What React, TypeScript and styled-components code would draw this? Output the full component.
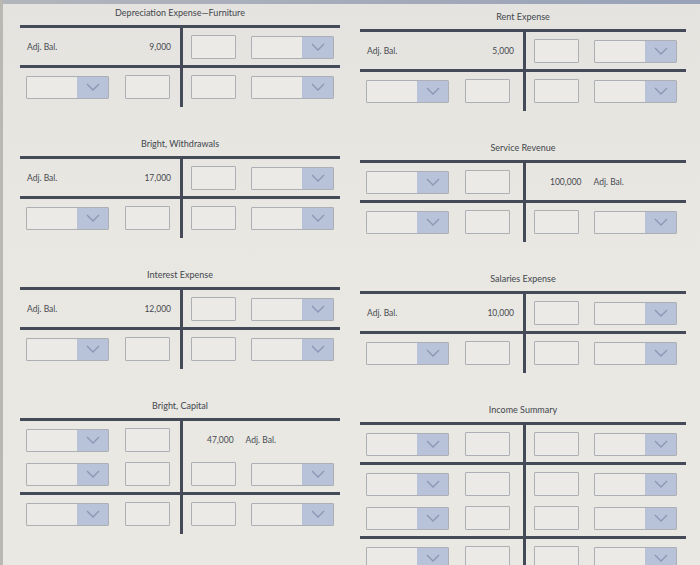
import React from "react";
import styled, { createGlobalStyle } from "styled-components";

const GlobalStyle = createGlobalStyle`
  html, body {
    margin: 0;
    padding: 0;
    width: 700px;
    height: 565px;
    overflow: hidden;
    background: #e7e6e1;
  }
  * { box-sizing: border-box; }
`;

type Side =
  | { kind: "entry" }
  | { kind: "debitBal"; amount: string }
  | { kind: "creditBal"; amount: string };

type Row = { left: Side; right: Side };
type Account = { title: string; sections: Row[][] };

const E: Side = { kind: "entry" };
const entryRow: Row = { left: E, right: E };
const debit = (amount: string): Row => ({ left: { kind: "debitBal", amount }, right: E });
const credit = (amount: string): Row => ({ left: E, right: { kind: "creditBal", amount } });

const leftAccounts: Account[] = [
  { title: "Depreciation Expense—Furniture", sections: [[debit("9,000")], [entryRow]] },
  { title: "Bright, Withdrawals", sections: [[debit("17,000")], [entryRow]] },
  { title: "Interest Expense", sections: [[debit("12,000")], [entryRow]] },
  { title: "Bright, Capital", sections: [[credit("47,000"), entryRow], [entryRow]] },
];

const rightAccounts: Account[] = [
  { title: "Rent Expense", sections: [[debit("5,000")], [entryRow]] },
  { title: "Service Revenue", sections: [[credit("100,000")], [entryRow]] },
  { title: "Salaries Expense", sections: [[debit("10,000")], [entryRow]] },
  { title: "Income Summary", sections: [[entryRow], [entryRow, entryRow], [entryRow]] },
];

const Page = styled.div`
  width: 700px;
  height: 565px;
  position: relative;
  overflow: hidden;
  background: linear-gradient(180deg, #e4e3df 0%, #e8e7e2 40%, #e9e8e3 100%);
  font-family: Lato, "Open Sans", "Liberation Sans", sans-serif;
  color: #474a50;
  border-left: 3px solid #b9b8b3;
`;

const TopBand = styled.div`
  height: 4px;
  background: linear-gradient(90deg, #b2b5bb 0%, #a4abba 50%, #98a2b8 100%);
`;

const Columns = styled.div`
  display: grid;
  grid-template-columns: 320px 326px;
  column-gap: 20px;
  padding-left: 17px;
`;

const Column = styled.div<{ $offset: number }>`
  display: flex;
  flex-direction: column;
  gap: 30px;
  padding-top: ${(p) => p.$offset}px;
`;

const AccountBox = styled.div`
  display: flex;
  flex-direction: column;
`;

const Title = styled.div`
  height: 14px;
  line-height: 14px;
  font-size: 9px;
  text-align: center;
  margin-bottom: 5px;
  color: #43464c;
`;

const Section = styled.div`
  display: flex;
  border-top: 3px solid #454a59;
`;

const Half = styled.div<{ $right?: boolean; $last: boolean }>`
  flex: 0 0 50%;
  display: flex;
  flex-direction: column;
  gap: 10px;
  padding-top: 7px;
  padding-bottom: ${(p) => (p.$last ? 8 : 6)}px;
  ${(p) =>
    p.$right
      ? `border-left: 3px solid #454a59; padding-left: 8px; padding-right: 6px;`
      : `padding-left: 6px; padding-right: 9px;`}
`;

const SideRow = styled.div<{ $align: "left" | "between" }>`
  height: 24px;
  display: flex;
  align-items: center;
  font-size: 8.5px;
  color: #474a50;
  justify-content: ${(p) => (p.$align === "between" ? "space-between" : "flex-start")};
  gap: 15px;
`;

const EntryLeftRow = styled(SideRow)`
  gap: 16px;
`;

const DebitLabel = styled.span`
  padding-left: 1px;
`;

const CreditRow = styled(SideRow)`
  padding-left: 16px;
  gap: 12px;
`;

const Box = styled.div`
  width: 45px;
  height: 24px;
  border: 1px solid #acafb5;
  border-radius: 1px;
  background: #ebeae6;
  flex: none;
`;

const Select = styled.div`
  width: 83px;
  height: 23px;
  border: 1px solid #acafb5;
  border-radius: 1px;
  background: #ebeae6;
  display: flex;
  justify-content: flex-end;
  flex: none;
`;

const Arrow = styled.div`
  width: 31px;
  height: 100%;
  background: #b8c2d8;
  display: flex;
  align-items: center;
  justify-content: center;
`;

const Chevron = () => (
  <svg width="14" height="8" viewBox="0 0 14 8">
    <path d="M1 1 L7 7 L13 1" fill="none" stroke="#8a96b4" strokeWidth="1.3" />
  </svg>
);

const SelectBox = () => (
  <Select>
    <Arrow>
      <Chevron />
    </Arrow>
  </Select>
);

const LeftSide = ({ side }: { side: Side }) => {
  if (side.kind === "debitBal") {
    return (
      <SideRow $align="between">
        <DebitLabel>Adj. Bal.</DebitLabel>
        <span>{side.amount}</span>
      </SideRow>
    );
  }
  return (
    <EntryLeftRow $align="left">
      <SelectBox />
      <Box />
    </EntryLeftRow>
  );
};

const RightSide = ({ side }: { side: Side }) => {
  if (side.kind === "creditBal") {
    return (
      <CreditRow $align="left">
        <span>{side.amount}</span>
        <span>Adj. Bal.</span>
      </CreditRow>
    );
  }
  return (
    <SideRow $align="left">
      <Box />
      <SelectBox />
    </SideRow>
  );
};

const TAccount = ({ account }: { account: Account }) => (
  <AccountBox>
    <Title>{account.title}</Title>
    {account.sections.map((rows, i) => {
      const last = i === account.sections.length - 1;
      return (
        <Section key={i}>
          <Half $last={last}>
            {rows.map((r, j) => (
              <LeftSide key={j} side={r.left} />
            ))}
          </Half>
          <Half $right $last={last}>
            {rows.map((r, j) => (
              <RightSide key={j} side={r.right} />
            ))}
          </Half>
        </Section>
      );
    })}
  </AccountBox>
);

export default function App() {
  return (
    <>
      <GlobalStyle />
      <Page>
        <TopBand />
        <Columns>
          <Column $offset={2}>
            {leftAccounts.map((a) => (
              <TAccount key={a.title} account={a} />
            ))}
          </Column>
          <Column $offset={6}>
            {rightAccounts.map((a) => (
              <TAccount key={a.title} account={a} />
            ))}
          </Column>
        </Columns>
      </Page>
    </>
  );
}
